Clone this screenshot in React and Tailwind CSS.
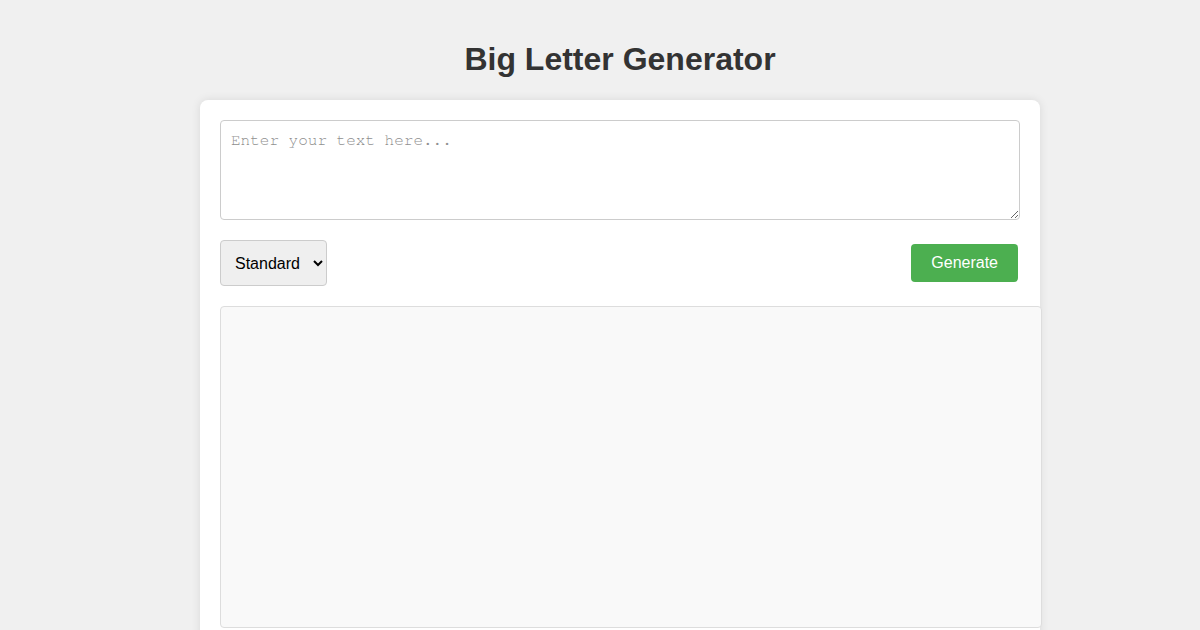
import React from 'react';

export default function App() {
  return (
    <div className="min-h-screen bg-[#f0f0f0] pt-5 pl-10 font-['Liberation_Sans',Arial,sans-serif] text-[#333]">
      <h1 className="text-center text-[32px] font-bold leading-[37px] mt-[21px] mb-[22px]">Big Letter Generator</h1>

      {/* card */}
      <div className="mx-auto w-[840px] bg-white rounded-lg p-5 shadow-[0_0_10px_rgba(0,0,0,0.1)] h-[560px]">
        <textarea
          className="block w-full h-[100px] border border-[#ccc] rounded p-[10px] font-['FreeMono','Nimbus_Mono_PS','Courier_New',monospace] text-base leading-[18px] text-[#333] placeholder:text-[#8f8f8f] bg-white"
          placeholder="Enter your text here..."
        />

        <div className="flex items-center justify-between mt-5">
          <select className="h-[46px] w-[107px] px-[10px] text-base text-black bg-[#efefef] border border-[#ccc] rounded">
            <option>Standard</option>
          </select>
          <button className="mr-[2px] h-[38px] px-5 bg-[#4CAF50] text-white text-base rounded">Generate</button>
        </div>

        <div className="mt-5 w-[822px] h-[322px] bg-[#f9f9f9] border border-[#ddd] rounded"></div>
      </div>
    </div>
  );
}
